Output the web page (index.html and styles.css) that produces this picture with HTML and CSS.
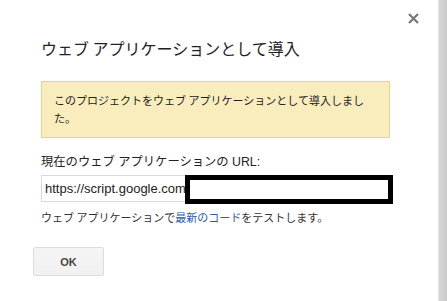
FILE: index.html
```html
<!DOCTYPE html>
<html lang="ja">
<head>
<meta charset="utf-8">
<link rel="stylesheet" href="styles.css">
</head>
<body>
<div class="page">
  <div class="dialog">
    <button class="close" aria-label="閉じる">
      <svg width="11" height="11" viewBox="0 0 11 11"><path d="M1 1 L10 10 M10 1 L1 10" stroke="#777" stroke-width="2.2" fill="none"/></svg>
    </button>
    <h1 class="title">ウェブ アプリケーションとして導入</h1>
    <div class="notice">このプロジェクトをウェブ アプリケーションとして導入しました。</div>
    <div class="label">現在のウェブ アプリケーションの URL:</div>
    <div class="field">
      <div class="input">https://script.google.com/macros/s/</div>
      <div class="redact"></div>
    </div>
    <div class="help">ウェブ アプリケーションで<a class="link" href="#">最新のコード</a>をテストします。</div>
    <div class="actions"><button class="ok">OK</button></div>
  </div>
  <div class="edge"></div>
</div>
</body>
</html>
```
FILE: styles.css
```css
html, body {
  margin: 0;
  padding: 0;
  background: #fff;
}
body {
  font-family: "Liberation Sans", "Noto Sans CJK JP", sans-serif;
  color: #222;
}
.page {
  display: flex;
  width: 447px;
  height: 301px;
  overflow: hidden;
}
.dialog {
  position: relative;
  flex: 1;
  padding: 38px 0 0 41px;
  background: #fff;
}
.edge {
  width: 8px;
  border-left: 1px solid #e6e6e6;
  background: linear-gradient(to right, #d6d6d6, #c9c9c9);
}
.close {
  position: absolute;
  top: 12px;
  left: 407px;
  width: 13px;
  height: 13px;
  padding: 1px;
  border: 0;
  background: transparent;
  display: flex;
  align-items: center;
  justify-content: center;
}
.title {
  margin: 0 0 23px;
  font-family: "Noto Sans CJK JP", sans-serif;
  font-weight: normal;
  font-size: 16px;
  line-height: 20px;
  color: #222;
}
.notice {
  width: 323px;
  padding: 9px 12px 10px 12px;
  border: 1px solid #e4d396;
  background: #f9edbe;
  font-family: "Noto Sans CJK JP", sans-serif;
  font-size: 11px;
  line-height: 18px;
  color: #222;
}
.label {
  margin-top: 16px;
  font-size: 12.3px;
  line-height: 16px;
  color: #222;
}
.field {
  position: relative;
  margin-top: 5px;
  width: 349px;
  height: 27px;
}
.input {
  box-sizing: border-box;
  height: 27px;
  padding: 0 3px;
  border: 1px solid #d9d9d9;
  font-size: 13px;
  line-height: 25px;
  color: #222;
  white-space: nowrap;
  overflow: hidden;
}
.redact {
  position: absolute;
  left: 144px;
  top: 0;
  width: 198px;
  height: 19px;
  border: 5px solid #000;
  background: #fff;
}
.help {
  margin-top: 7px;
  font-family: "Noto Sans CJK JP", sans-serif;
  font-size: 11px;
  line-height: 16px;
  color: #333;
}
.link {
  color: #2a5db0;
  text-decoration: none;
}
.actions {
  margin: 22px 0 0 -8px;
}
.ok {
  width: 71px;
  height: 29px;
  border: 1px solid #dcdcdc;
  border-radius: 2px;
  background: linear-gradient(#f5f5f5, #f1f1f1);
  font-family: "Liberation Sans", sans-serif;
  font-size: 11px;
  font-weight: bold;
  color: #444;
  padding: 0;
}
```
